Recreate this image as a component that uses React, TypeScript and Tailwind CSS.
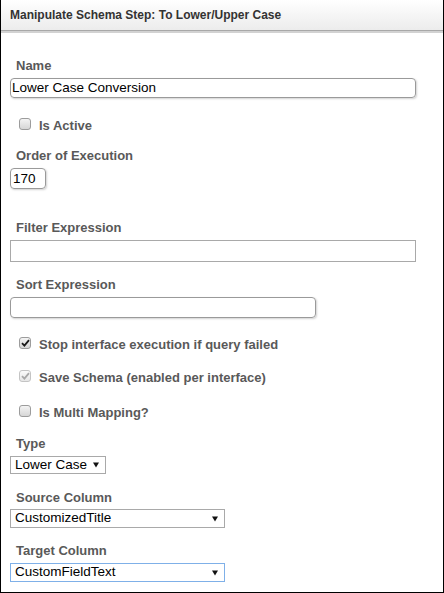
import React from 'react';

const font = { fontFamily: '"Liberation Sans", Arial, sans-serif' };

function Label({ text, className = '' }: { text: string; className?: string }) {
  return (
    <div className={`ml-[15px] h-[15px] text-[13px] leading-[15px] font-bold text-[#595959] ${className}`}>
      {text}
    </div>
  );
}

function Check({ checked, disabled }: { checked?: boolean; disabled?: boolean }) {
  return (
    <span
      className={`relative flex h-[12px] w-[12px] shrink-0 items-center justify-center rounded-[3px] border ${
        disabled ? 'border-[#c4c4c4] bg-linear-to-b from-[#fafafa] to-[#e6e6e6]' : 'border-[#9c9c9c] bg-linear-to-b from-[#f4f4f4] to-[#d6d6d6]'
      }`}
    >
      {checked && (
        <svg width="9" height="8" viewBox="0 0 9 8">
          <path
            d="M1 4.2 L3.4 6.6 L8 1.2"
            fill="none"
            stroke={disabled ? '#a8a8a8' : '#1a1a1a'}
            strokeWidth="1.8"
          />
        </svg>
      )}
    </span>
  );
}

function CheckRow({ text, checked, disabled, className = '' }: { text: string; checked?: boolean; disabled?: boolean; className?: string }) {
  return (
    <div className={`ml-[18px] flex h-[15px] items-start gap-[8px] ${className}`}>
      <Check checked={checked} disabled={disabled} />
      <span className="text-[13px] leading-[15px] font-bold text-[#595959]">{text}</span>
    </div>
  );
}

function Select({ value, width, focused, className = '' }: { value: string; width: string; focused?: boolean; className?: string }) {
  return (
    <div
      className={`ml-[9px] flex items-center justify-between border bg-white pl-[4px] pr-[6px] text-[13.5px] text-black ${width} ${
        focused ? 'border-[#7fb0e8]' : 'border-[#a9a9a9]'
      } ${className}`}
    >
      <span className="whitespace-nowrap">{value}</span>
      <svg width="6" height="6" viewBox="0 0 6 6" className="shrink-0">
        <path d="M0 0.5 H6 L3 5.5 Z" fill="#111" />
      </svg>
    </div>
  );
}

export default function App() {
  return (
    <div style={font} className="h-[593px] w-[444px] border-r border-b border-l border-black bg-white">
      <div className="h-[31px] border-b border-[#a8a8a8] bg-linear-to-b from-white to-[#ececec] pl-[9px] text-[12px] leading-[30px] font-bold text-[#333]">
        Manipulate Schema Step: To Lower/Upper Case
      </div>
      <div className="h-[2px] bg-[#d2d2d2]" />

      <Label text="Name" className="mt-[25px]" />
      <input
        readOnly
        value="Lower Case Conversion"
        className="mt-[5px] ml-[9px] block h-[20px] w-[406px] rounded-[4px] border border-[#9a9a9a] px-[1px] text-[13.5px] text-black shadow-[1px_1px_2px_rgba(0,0,0,0.18)] outline-none"
      />

      <CheckRow text="Is Active" className="mt-[20px]" />

      <Label text="Order of Execution" className="mt-[15px]" />
      <input
        readOnly
        value="170"
        className="mt-[5px] ml-[9px] block h-[21px] w-[36px] rounded-[4px] border border-[#9a9a9a] px-[2px] text-[13.5px] text-black shadow-[1px_1px_2px_rgba(0,0,0,0.18)] outline-none"
      />

      <Label text="Filter Expression" className="mt-[31px]" />
      <input
        readOnly
        value=""
        className="mt-[5px] ml-[9px] block h-[22px] w-[406px] border border-[#a9a9a9] px-[2px] text-[13.5px] text-black outline-none"
      />

      <Label text="Sort Expression" className="mt-[15px]" />
      <input
        readOnly
        value=""
        className="mt-[5px] ml-[9px] block h-[21px] w-[306px] rounded-[4px] border border-[#9a9a9a] px-[2px] text-[13.5px] text-black shadow-[1px_1px_2px_rgba(0,0,0,0.18)] outline-none"
      />

      <CheckRow text="Stop interface execution if query failed" checked className="mt-[19px]" />
      <CheckRow text="Save Schema (enabled per interface)" checked disabled className="mt-[18px]" />
      <CheckRow text="Is Multi Mapping?" className="mt-[20px]" />

      <Label text="Type" className="mt-[16px]" />
      <Select value="Lower Case" width="w-[96px]" className="mt-[5px] h-[18px]" />

      <Label text="Source Column" className="mt-[16px]" />
      <Select value="CustomizedTitle" width="w-[215px]" className="mt-[4px] h-[19px]" />

      <Label text="Target Column" className="mt-[15px]" />
      <Select value="CustomFieldText" width="w-[215px]" focused className="mt-[5px] h-[19px]" />
    </div>
  );
}
